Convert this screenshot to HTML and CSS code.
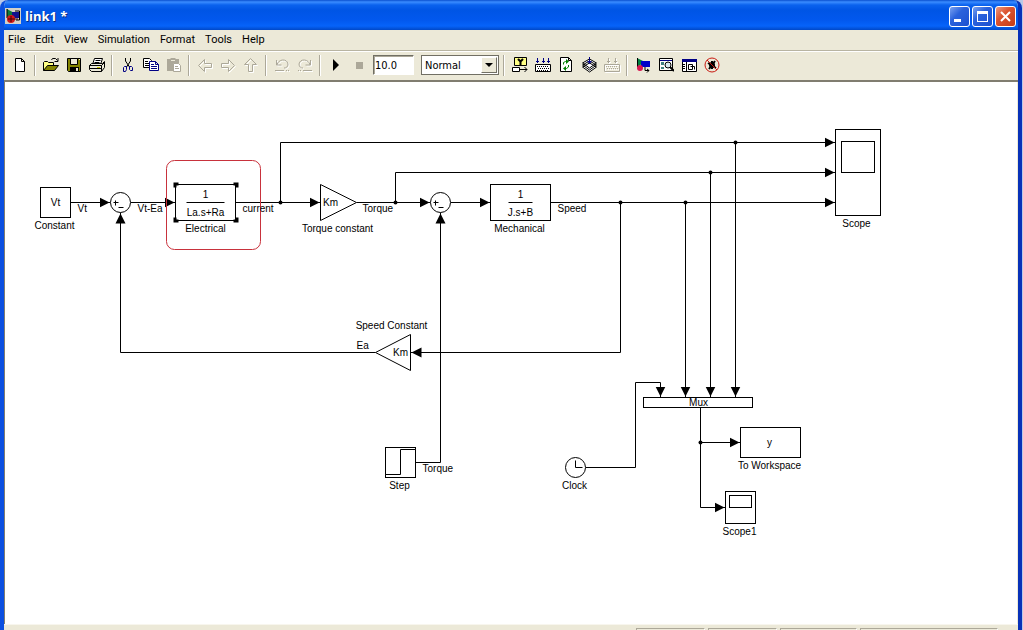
FILE: index.html
```html
<!DOCTYPE html>
<html lang="en">
<head>
    <meta charset="UTF-8">
    <meta name="viewport" content="width=device-width, initial-scale=1.0">
    <title>link1 *</title>
    <link rel="stylesheet" href="styles.css">
</head>
<body>

    <div class="window">

        <header class="titlebar">
            <svg class="logo" width="16" height="16" viewBox="0 0 16 16">
                <path fill="#d4d0c8" d="M0 0h16v16H0z"/>
                <path fill="#0a7a3a" d="M2 1l9 5-9 5z"/>
                <path fill="#10108c" d="M7 4h7v6H7z"/>
                <path fill="none" stroke="#000" d="M2 1v9M10 3h4.500v9H11"/>
                <circle cx="6" cy="11" r="4" fill="#d01818"/>
                <path stroke="#400" d="M6 8v6M3 11h10"/>
            </svg>
            <h1>link1 *</h1>
            <button class="caption" aria-label="Minimize"><svg width="19" height="19"><path fill="#fff" d="M4 12h7v3H4z"/></svg></button>
            <button class="caption" aria-label="Maximize"><svg width="19" height="19"><path fill="#fff" fill-rule="evenodd" d="M4 4h11v11H4zM5 7v7h9V7z"/></svg></button>
            <button class="caption close" aria-label="Close"><svg width="19" height="19"><path stroke="#fff" stroke-width="2" d="M5 5l9 9M14 5l-9 9"/></svg></button>
        </header>

        <nav class="menu">
            <a href="#">File</a>
            <a href="#">Edit</a>
            <a href="#">View</a>
            <a href="#">Simulation</a>
            <a href="#">Format</a>
            <a href="#">Tools</a>
            <a href="#">Help</a>
        </nav>

        <div class="toolbar">
            <button aria-label="New"><svg class="icon" viewBox="0 0 16 16"><path fill="#fff" stroke="#000" d="M3.500 1.500h6l3 3v10h-9zM9.500 1.500v3h3"/></svg></button>
            <span class="sep"></span>
            <button aria-label="Open"><svg class="icon" viewBox="0 0 16 16"><path fill="#ffff84" stroke="#000" d="M.500 13.500v-8l1-1h3l1 1h5v3"/><path fill="#848400" stroke="#000" d="M.500 13.500l4-5h11l-4 5z"/><path fill="none" stroke="#000" d="M8.500 3l1-1.500h3l2 2M15 1v3.500h-3.500"/></svg></button>
            <button aria-label="Save"><svg class="icon" viewBox="0 0 16 16"><path fill="#848400" stroke="#000" d="M1.500 1.500h13v13h-12l-1-1z"/><path fill="#ece9d8" stroke="#000" d="M4.500 1.500h7v6h-7z"/><path fill="#000" d="M4 10h9v5H4z"/><path fill="#ece9d8" d="M10 11h2v3h-2zM13 2h1v1h-1z"/></svg></button>
            <button aria-label="Print"><svg class="icon" viewBox="0 0 16 16"><path fill="#fff" stroke="#000" d="M3.500 7.500l2-6h8l-2 6zM6.500 3.500h5M5.500 5.500h5"/><path fill="#ece9d8" stroke="#000" d="M.500 8.500l2-2h11l2-2v6l-3 4h-10l-2-2z"/><path fill="none" stroke="#000" d="M.500 8.500h12v6M12.500 8.500l3-3M1 11.500h11"/><path fill="#c8c800" d="M8 10h3v1H8z"/></svg></button>
            <span class="sep"></span>
            <button aria-label="Cut"><svg class="icon" viewBox="0 0 16 16"><path fill="none" stroke="#000" d="M5.500 1v3l4 6M10.500 1v3l-4 6"/><path fill="none" stroke="#000084" d="M4.500 9.500h2v3l-1 2h-2v-4zM9.500 9.500h2l1 1v3h-2l-1-1z"/></svg></button>
            <button aria-label="Copy"><svg class="icon" viewBox="0 0 16 16"><path fill="#fff" stroke="#000" d="M.500 1.500h6l2 2v7h-8z"/><path stroke="#000" d="M2 4.500h3M2 6.500h4M2 8.500h4"/><path fill="#fff" stroke="#000084" d="M6.500 4.500h6l3 3v6h-9zM12.500 4.500v3h3M8 7.500h3M8 9.500h6M8 11.500h6"/></svg></button>
            <button aria-label="Paste" disabled><svg class="icon" viewBox="0 0 16 16"><path fill="#aca899" d="M1 2h3l1-1h4l1 1h3v12H1z"/><path fill="#ece9d8" d="M5 3h4v1H5z"/><path fill="#fff" stroke="#aca899" d="M7.500 6.500h5l2 2v6h-7zM9 9.500h3M9 11.500h4"/></svg></button>
            <span class="sep"></span>
            <button aria-label="Back" disabled><svg class="icon etched" viewBox="0 0 16 16"><path d="M1.500 8.500l6-6v4h7v4h-7v4z"/></svg></button>
            <button aria-label="Forward" disabled><svg class="icon etched" viewBox="0 0 16 16"><path d="M14.500 8.500l-6-6v4h-7v4h7v4z"/></svg></button>
            <button aria-label="Up" disabled><svg class="icon etched" viewBox="0 0 16 16"><path d="M7.500 1.500l6 6h-4v7h-4v-7h-4z"/></svg></button>
            <span class="sep"></span>
            <button aria-label="Undo" disabled><svg class="icon etched" viewBox="0 0 16 16"><path d="M2.500 3v5h5M3 8c1-6 10-7 11-1 0 3-2 4-4 4M1 13.500h9M12 13.500h1M14 13.500h1"/></svg></button>
            <button aria-label="Redo" disabled><svg class="icon etched" viewBox="0 0 16 16"><path d="M13.500 3v5h-5M13 8C12 2 3 1 2 7c0 3 2 4 4 4M6 13.500h9M3 13.500h1M1 13.500h1"/></svg></button>
            <span class="sep"></span>
            <button aria-label="Start"><svg class="icon" viewBox="0 0 16 16"><path d="M5 2l6 6-6 6z"/></svg></button>
            <button aria-label="Stop" disabled><svg class="icon" viewBox="0 0 16 16"><path fill="#aca899" d="M5 5h7v7H5z"/></svg></button>
            <input class="stoptime" type="text" value="10.0" aria-label="Stop time">
            <div class="mode">
                <select aria-label="Simulation mode">
                    <option>Normal</option>
                </select>
                <span class="drop"></span>
            </div>
            <span class="sep"></span>
            <button aria-label="Show output ports"><svg class="icon" viewBox="0 0 16 16"><path fill="#ffff84" stroke="#000" d="M2.500 .500h12v8h-12z"/><path fill="none" stroke="#000" stroke-width="2" d="M6 2l2.500 2.500L11 2M8.500 4v4"/><path fill="none" stroke="#000" d="M8 12.500h7M12.500 10l2.500 2.500-2.500 2.500"/><path fill="#fff" stroke="#000" d="M.500 10.500h7v4h-7z"/></svg></button>
            <button aria-label="Build"><svg class="icon" viewBox="0 0 16 16"><path fill="none" stroke="#000084" d="M2.500 1v5M1 4.500h3M8.500 1v5M7 4.500h3M13.500 1v5M12 4.500h3"/><path fill="#fff" stroke="#000" d="M.500 7.500h15v7H.500z"/><path stroke="#000" stroke-dasharray="1 1" d="M2 9.500h12M3 11.500h12M2 13.500h12"/></svg></button>
            <button aria-label="Refresh"><svg class="icon" viewBox="0 0 16 16"><path fill="#fff" stroke="#000" d="M2.500 .500h8l3 3v11h-11zM10.500 .500v3h3"/><path fill="none" stroke="#008000" d="M5.500 7.500v-2l2-1h1M10.500 8v2l-2 1.500h-1"/><path fill="#008000" d="M8 2l3 2.500L8 7zM8 9l-3 2.500L8 14z"/></svg></button>
            <button aria-label="Library"><svg class="icon" viewBox="0 0 16 16"><path fill="#fff" stroke="#000" d="M1.500 10l7 5 7-5-7-4zM1.500 8l7 5 7-5-7-4zM1.500 6l7 5 7-5-7-4z"/><path fill="#000084" d="M8 0h1v4h2l-2.500 3L6 4h2z"/></svg></button>
            <button aria-label="Build subsystem" disabled><svg class="icon etched" viewBox="0 0 16 16"><path d="M4.500 1v5M3 4.500h3M11.500 1v5M10 4.500h3M.500 7.500h15v7H.500z"/><path stroke-dasharray="1 1" d="M2 9.500h12M3 11.500h12"/></svg></button>
            <span class="sep"></span>
            <button aria-label="Library browser"><svg class="icon" viewBox="0 0 16 16"><path fill="#008040" d="M2 1l8 4-8 5z"/><path fill="#0000c8" d="M6 4h9v6H6z"/><path fill="none" stroke="#000" d="M2.500 1v9M10 10v3.500h4M12 12l2 1.500-2 2"/><circle cx="5" cy="11" r="3" fill="#d81850"/></svg></button>
            <button aria-label="Model explorer"><svg class="icon" viewBox="0 0 16 16"><path fill="#fff" stroke="#000" d="M1.500 1.500h13v12h-13z"/><path stroke="#000084" d="M2 3.500h12"/><path fill="#408080" d="M3 5h3v3H3zM3 10h3v2H3z"/><circle cx="10" cy="8" r="3" fill="#d8e8f0" stroke="#000"/><path stroke="#000" stroke-width="2" d="M12 10l4 4"/></svg></button>
            <button aria-label="Model browser"><svg class="icon" viewBox="0 0 16 16"><path fill="#fff" stroke="#000" d="M1.500 2.500h14v12h-14z"/><path fill="#000084" d="M1 2h15v3H1z"/><path fill="none" stroke="#000" d="M5.500 5v9M2 7.500h2M2 9.500h2M2 11.500h2M7.500 7.500h4v5h-4zM9.500 9.500h4v3"/></svg></button>
            <button aria-label="Debug"><svg class="icon" viewBox="0 0 16 16"><path fill="none" stroke="#000" stroke-width="2" d="M4 6l8 5M5 12l6-8M8 4v8"/><circle cx="8" cy="8" r="3" fill="#000"/><circle cx="8" cy="8" r="7" fill="none" stroke="#c81810"/><path stroke="#c81810" d="M3 3l10 10"/></svg></button>
        </div>

        <main class="canvas">
            <svg class="model" width="1012" height="540" viewBox="4.500 81.500 1012 540">
                <defs>
                    <marker id="arrow" markerUnits="userSpaceOnUse" markerWidth="11" markerHeight="12" refX="11" refY="6" orient="auto">
                        <path d="M0 1l10 5-10 5z"/>
                    </marker>
                </defs>

                <!-- signal lines -->
                <g class="signal">
                    <path d="M70 202H110"/>
                    <path d="M130 202H175"/>
                    <path d="M235 202H320"/>
                    <path d="M280 202V142H835"/>
                    <path d="M356 202H430"/>
                    <path d="M395 202V172H835"/>
                    <path d="M450 202H490"/>
                    <path d="M550 202H835"/>
                    <path d="M620 202V352H410"/>
                    <path d="M375 352H120V212"/>
                    <path d="M415 462H440V212"/>
                    <path d="M585 467H635V382H660V397"/>
                    <path d="M685 202V397"/>
                    <path d="M710 172V397"/>
                    <path d="M735 142V397"/>
                    <path d="M700 407V507H725"/>
                    <path d="M700 442H740"/>
                </g>

                <!-- branch points -->
                <g class="branch">
                    <circle cx="280" cy="202" r="2"/>
                    <circle cx="395" cy="202" r="2"/>
                    <circle cx="620" cy="202" r="2"/>
                    <circle cx="685" cy="202" r="2"/>
                    <circle cx="710" cy="172" r="2"/>
                    <circle cx="735" cy="142" r="2"/>
                    <circle cx="700" cy="442" r="2"/>
                </g>

                <!-- blocks -->
                <g class="block">
                    <rect x="40" y="187" width="30" height="30"/>
                    <circle cx="120" cy="202" r="10"/>
                    <path d="M113 202h5M115 200v5M118 207h5"/>
                    <rect x="175" y="184" width="60" height="36"/>
                    <path d="M186 202h38"/>
                    <path d="M320 184v36l36-18z"/>
                    <circle cx="440" cy="202" r="10"/>
                    <path d="M433 202h5M435 200v5M438 207h5"/>
                    <rect x="490" y="184" width="60" height="36"/>
                    <path d="M508 202h24"/>
                    <path d="M410 334v36l-35-18z"/>
                    <rect x="385" y="447" width="30" height="30"/>
                    <path d="M385 474h15v-25h15"/>
                    <circle cx="575" cy="467" r="10"/>
                    <path d="M575 460v7h7"/>
                    <rect x="643" y="397" width="109" height="10"/>
                    <rect x="740" y="427" width="60" height="30"/>
                    <rect x="725" y="491" width="30" height="32"/>
                    <rect x="729" y="495" width="22" height="12"/>
                    <rect x="835" y="129" width="45" height="86"/>
                    <rect x="841" y="141" width="33" height="31"/>
                </g>

                <!-- selection handles -->
                <g class="handles">
                    <path d="M173 182h5v3h-2v2h-3z"/>
                    <path d="M238 182h-5v3h2v2h3z"/>
                    <path d="M173 222h5v-3h-2v-2h-3z"/>
                    <path d="M238 222h-5v-3h2v-2h3z"/>
                </g>
                <rect class="highlight" x="166" y="160" width="94" height="89" rx="8"/>

                <g class="inside">
                    <text x="55" y="205">Vt</text>
                    <text x="205" y="197">1</text>
                    <text x="205" y="215">La.s+Ra</text>
                    <text x="330" y="205">Km</text>
                    <text x="520" y="197">1</text>
                    <text x="520" y="215">J.s+B</text>
                    <text x="400" y="355">Km</text>
                    <text x="698" y="405">Mux</text>
                    <text x="769" y="445">y</text>
                </g>
                <g class="name">
                    <text x="54" y="228">Constant</text>
                    <text x="205" y="231">Electrical</text>
                    <text x="337" y="231">Torque constant</text>
                    <text x="519" y="231">Mechanical</text>
                    <text x="391" y="328">Speed Constant</text>
                    <text x="399" y="488">Step</text>
                    <text x="574" y="488">Clock</text>
                    <text x="769" y="468">To Workspace</text>
                    <text x="739" y="534">Scope1</text>
                    <text x="856" y="226">Scope</text>
                </g>
                <g class="wire-label">
                    <text x="77" y="211">Vt</text>
                    <text x="137" y="211">Vt-Ea</text>
                    <text x="242" y="211">current</text>
                    <text x="362" y="211">Torque</text>
                    <text x="557" y="211">Speed</text>
                    <text x="356" y="348">Ea</text>
                    <text x="422" y="471">Torque</text>
                </g>
            </svg>
        </main>

        <footer class="status">
            <span class="ready"></span>
            <span class="pane"></span>
            <span class="pane"></span>
            <span class="pane"></span>
            <span class="pane last"></span>
        </footer>

    </div>

</body>
</html>
```
FILE: styles.css
```css
*{
    box-sizing: border-box;
}

body{
    margin: 0;
    height: 100vh;
    overflow: hidden;
    background-color: #b9c9e8;
    font-family: "DejaVu Sans Condensed", "DejaVu Sans", sans-serif;
    font-size: 11px;
    color: black;
}

.window{
    display: flex;
    flex-direction: column;
    height: 100vh;
    margin-right: 1px;
    border-left: 4px solid #0b4fe0;
    border-right: 4px solid #0831b8;
    border-radius: 8px 8px 0 0;
    background-color: #ece9d8;
    overflow: hidden;
}

.titlebar{
    display: flex;
    align-items: center;
    gap: 2px;
    flex: none;
    height: 30px;
    margin: 0 -4px;
    padding: 2px 6px 0 5px;
    background: linear-gradient(#0a50d0 0, #3a8cff 2px, #0a62ee 5px, #0055e5 10px, #0258ee 20px, #0663fa 26px, #0048c8 30px);
}

.titlebar h1{
    flex: 1;
    margin: 0 0 0 2px;
    font-family: "Open Sans", sans-serif;
    font-size: 13px;
    font-weight: bold;
    color: white;
    text-shadow: 1px 1px #0a3080;
}

.caption{
    width: 21px;
    height: 21px;
    padding: 0;
    border: 1px solid white;
    border-radius: 3px;
    background: linear-gradient(135deg, #7ba2f0, #2a62dc 40%, #1c50d0);
}

.caption svg{
    display: block;
}

.close{
    background: linear-gradient(135deg, #ee9a80, #dc5430 40%, #c43c18);
}

.menu{
    display: flex;
    align-items: center;
    gap: 10px;
    flex: none;
    height: 21px;
    padding: 0 4px 2px;
    border-bottom: 1px solid #b8b4a2;
    font-family: Roboto, sans-serif;
}

.menu a{
    color: black;
    text-decoration: none;
}

.toolbar{
    display: flex;
    align-items: center;
    flex: none;
    height: 31px;
    padding: 0 0 2px 4px;
    border-top: 1px solid white;
    border-bottom: 2px solid #807d70;
}

.toolbar button{
    display: flex;
    justify-content: center;
    align-items: center;
    width: 23px;
    height: 22px;
    padding: 0;
    border: 0;
    background: none;
}

.icon{
    width: 16px;
    height: 16px;
}

.etched{
    fill: none;
    stroke: #aca899;
    filter: drop-shadow(1px 1px white);
}

.sep{
    width: 2px;
    height: 21px;
    margin: 0 3px;
    border-left: 1px solid #aca899;
    border-right: 1px solid white;
}

.stoptime{
    width: 41px;
    height: 20px;
    margin: 0 7px 0 3px;
    padding: 0 1px;
    border: 1px solid;
    border-color: #716f64 white white #716f64;
    box-shadow: inset 1px 1px #aca899;
    font: inherit;
}

.mode{
    position: relative;
    width: 78px;
    height: 20px;
    margin-right: 1px;
}

.mode select{
    width: 100%;
    height: 100%;
    padding: 0 3px;
    appearance: none;
    border: 1px solid #716f64;
    border-radius: 0;
    background-color: white;
    font: inherit;
    color: black;
}

.drop{
    position: absolute;
    top: 2px;
    right: 2px;
    display: flex;
    justify-content: center;
    align-items: center;
    width: 16px;
    height: 16px;
    border: 1px solid;
    border-color: white #716f64 #716f64 white;
    background-color: #ece9d8;
    pointer-events: none;
}

.drop::after{
    content: "";
    border: 4px solid transparent;
    border-top-color: black;
    border-bottom: 0;
}

.canvas{
    flex: 1;
    min-height: 0;
    margin-right: 1px;
    border-left: 1px solid #807d70;
    background-color: white;
    overflow: hidden;
}

.model{
    display: block;
    font-family: "Liberation Sans", Arial, sans-serif;
    font-size: 10px;
}

.signal{
    fill: none;
    stroke: black;
}

.signal path{
    marker-end: url(#arrow);
}

/* keep the heads solid without a stroke of their own */
#arrow path{
    fill: black;
    stroke: none;
}

.block{
    fill: white;
    stroke: black;
}

.highlight{
    fill: none;
    stroke: #c8323c;
}

.inside,
.name{
    text-anchor: middle;
}

.status{
    display: flex;
    gap: 3px;
    flex: none;
    height: 6px;
    padding: 3px 20px 0 0;
    border-top: 1px solid #f8f6ee;
}

.ready{
    flex: 1;
}

.pane{
    width: 69px;
    border: 1px solid #aca899;
    border-right-color: white;
    border-bottom: 0;
}

.pane:nth-child(4){
    width: 77px;
}

.last{
    width: 138px;
}
```
